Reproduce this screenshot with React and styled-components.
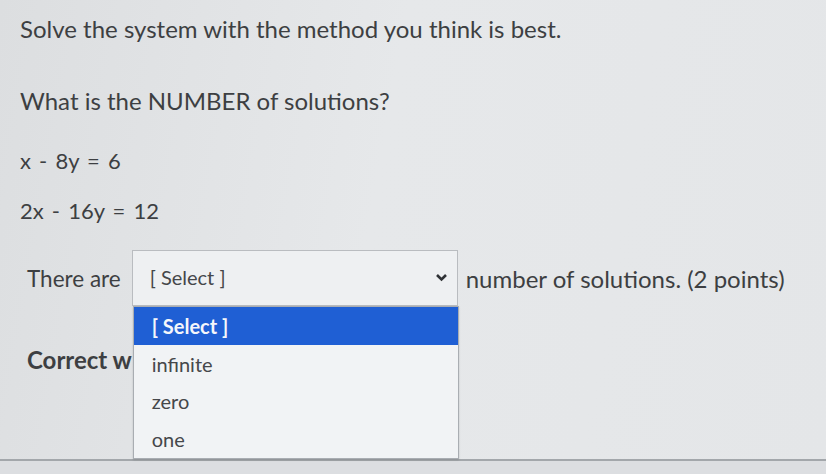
import React from "react";
import styled, { createGlobalStyle } from "styled-components";

const GlobalStyle = createGlobalStyle`
    html, body {
        margin: 0;
        padding: 0;
        background: #e3e5e7;
    }
    body {
        font-family: Lato, "Open Sans", sans-serif;
        color: #3d3f42;
        width: 826px;
        height: 474px;
        overflow: hidden;
    }
`;

const Page = styled.div`
    height: 474px;
    box-sizing: border-box;
    display: flex;
    flex-direction: column;
    background: linear-gradient(100deg, #dcdee0 0%, #e6e8ea 45%, #e4e6e8 100%);
`;

const Content = styled.div`
    flex: 1;
    padding: 14px 20px 0 20px;
`;

const Prompt = styled.p`
    margin: 0 0 ${(p) => p.gap || 36}px 0;
    font-size: 24px;
    line-height: 30px;
`;

const Equation = styled.p`
    margin: 0 0 20px 0;
    font-size: 22px;
    line-height: 30px;
    word-spacing: 2.5px;
`;

const AnswerRow = styled.div`
    display: flex;
    align-items: center;
    margin: 24px 0 0 7px;
    font-size: 22.5px;
`;

const Trailing = styled.span`
    font-size: 24px;
`;

const SelectWrap = styled.div`
    position: relative;
    margin: 0 8px 0 11px;
`;

const SelectBox = styled.div`
    width: 326px;
    height: 56px;
    box-sizing: border-box;
    border: 1px solid #b9bcc0;
    background: #eef0f2;
    display: flex;
    align-items: flex-start;
    justify-content: space-between;
    padding: 14px 9px 0 17px;
    font-size: 20px;
    color: #45474a;
`;

const Chevron = styled.svg`
    width: 13px;
    height: 9px;
    margin-top: 8px;
`;

const Menu = styled.ul`
    position: absolute;
    top: 56px;
    left: 1px;
    width: 326px;
    margin: 0;
    padding: 0;
    list-style: none;
    box-sizing: border-box;
    border: 1px solid #a9adb2;
    background: #f1f3f5;
    box-shadow: 0 1px 2px rgba(0, 0, 0, 0.15);
`;

const Option = styled.li`
    height: ${(p) => (p.active ? "38px" : "37.5px")};
    display: flex;
    align-items: center;
    padding-left: 18px;
    font-size: 20px;
    font-weight: ${(p) => (p.active ? 700 : 400)};
    color: ${(p) => (p.active ? "#f4f6fb" : "#45474a")};
    background: ${(p) => (p.active ? "#1f5fd4" : "transparent")};
`;

const Correct = styled.p`
    margin: 39px 0 0 7px;
    font-size: 24px;
    font-weight: 700;
    white-space: nowrap;
`;

const Footer = styled.div`
    height: 13px;
    border-top: 2px solid #a3a7ab;
    background: #dcdee1;
`;

const options = ["[ Select ]", "infinite", "zero", "one"];

export default function App() {
    return (
        <>
            <GlobalStyle />
            <Page>
                <Content>
                    <Prompt gap={42}>Solve the system with the method you think is best.</Prompt>
                    <Prompt gap={30}>What is the NUMBER of solutions?</Prompt>
                    <Equation>x - 8y = 6</Equation>
                    <Equation>2x - 16y = 12</Equation>
                    <AnswerRow>
                        There are
                        <SelectWrap>
                            <SelectBox>
                                [ Select ]
                                <Chevron viewBox="0 0 13 9">
                                    <path d="M2 2 L6.5 6.5 L11 2" fill="none" stroke="#2f3236" strokeWidth="2.6" />
                                </Chevron>
                            </SelectBox>
                            <Menu>
                                {options.map((o, i) => (
                                    <Option key={o} active={i === 0}>{o}</Option>
                                ))}
                            </Menu>
                        </SelectWrap>
                        <Trailing>number of solutions. (2 points)</Trailing>
                    </AnswerRow>
                    <Correct>Correct w</Correct>
                </Content>
                <Footer />
            </Page>
        </>
    );
}
